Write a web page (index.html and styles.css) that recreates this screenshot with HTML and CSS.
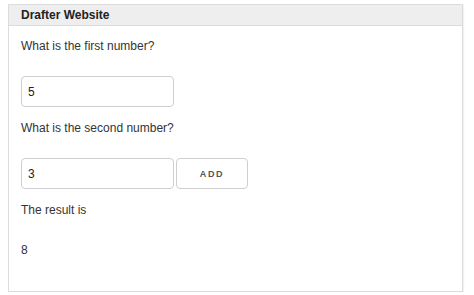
FILE: index.html
```html
<!DOCTYPE html>
<html lang="en">
<head>
    <meta charset="UTF-8">
    <meta name="viewport" content="width=device-width, initial-scale=1.0">
    <title>Drafter Website</title>
    <link rel="stylesheet" href="styles.css">
</head>
<body>
    <div class="site-frame">
        <div class="site-header">Drafter Website</div>
        <div class="site-body">
            <p class="field-label">What is the first number?</p>
            <div class="form-row">
                <input type="text" class="text-input" value="5">
            </div>
            <p class="field-label">What is the second number?</p>
            <div class="form-row">
                <input type="text" class="text-input" value="3">
                <button type="button" class="action-button">ADD</button>
            </div>
            <p class="field-label">The result is</p>
            <p class="result-value">8</p>
        </div>
    </div>
</body>
</html>
```

FILE: styles.css
```css
* {
    margin: 0;
    padding: 0;
    box-sizing: border-box;
    font-family: 'Liberation Sans', Arial, sans-serif;
}

body {
    background-color: white;
    margin: 4px 0 0 8px;
    color: #333;
    font-size: 12px;
}

.site-frame {
    width: 455px;
    height: 288px;
    border: 1px solid #dcdcdc;
    box-shadow: 1px 1px 1px rgba(0, 0, 0, 0.05);
}

.site-header {
    height: 21px;
    line-height: 20px;
    padding-left: 12px;
    background-color: #eeeeee;
    border-bottom: 1px solid #dcdcdc;
    font-weight: bold;
    color: #222;
}

.site-body {
    padding: 10px 12px;
}

.field-label,
.result-value {
    line-height: 20px;
    margin-bottom: 20px;
}

.form-row {
    display: flex;
    gap: 2px;
    margin-bottom: 11px;
}

.text-input {
    width: 153px;
    height: 31px;
    padding: 0 6px;
    border: 1px solid #cfcfcf;
    border-radius: 4px;
    font-size: 12px;
    color: #222;
}

.text-input:focus {
    outline: none;
    border-color: #999;
}

.action-button {
    width: 72px;
    height: 31px;
    background-color: white;
    border: 1px solid #cfcfcf;
    border-radius: 4px;
    font-size: 9px;
    font-weight: bold;
    letter-spacing: 1.6px;
    color: #555;
    cursor: pointer;
}

.action-button:hover {
    background-color: #f5f5f5;
}
```
